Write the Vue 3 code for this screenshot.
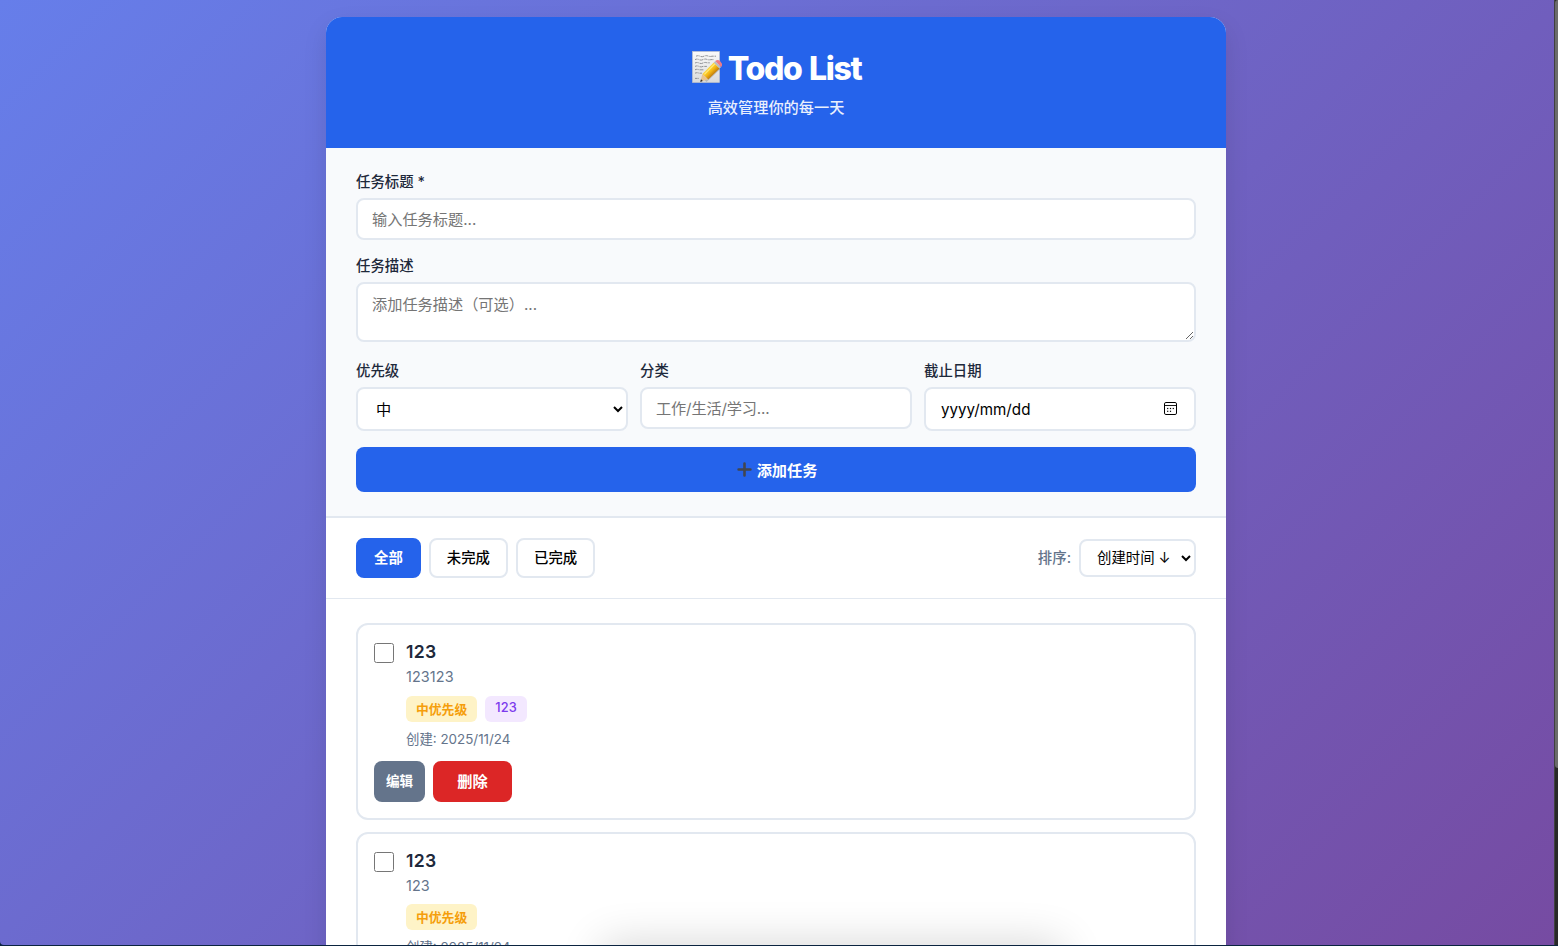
<script setup>
import { ref } from 'vue'

const filters = [
  { key: 'all', label: '全部' },
  { key: 'active', label: '未完成' },
  { key: 'completed', label: '已完成' },
]

const currentFilter = ref('all')
const title = ref('')
const description = ref('')
const priority = ref('medium')
const category = ref('')
const sortBy = ref('created_desc')

const todos = ref([
  { id: 2, title: '123', description: '123123', category: '123', createdAt: '2025/11/24', done: false },
  { id: 1, title: '123', description: '123', category: '', createdAt: '2025/11/24', done: false },
])

function removeTodo(id) {
  todos.value = todos.value.filter((todo) => todo.id !== id)
}
</script>

<template>
  <div class="window">
    <main class="page">
      <div class="container">
        <header class="header">
          <h1>
            <svg class="memo" viewBox="0 0 32 34" aria-hidden="true">
              <defs>
                <linearGradient id="paper" x1="0" y1="0" x2="0" y2="1">
                  <stop offset="0" stop-color="#fafafa" />
                  <stop offset="1" stop-color="#d9dadb" />
                </linearGradient>
                <linearGradient id="wood" x1="0.3" y1="0.3" x2="0.7" y2="0.7">
                  <stop offset="0" stop-color="#ffdc42" />
                  <stop offset="0.5" stop-color="#f6b915" />
                  <stop offset="1" stop-color="#b8730a" />
                </linearGradient>
              </defs>
              <rect x="1.4" y="1.4" width="27.2" height="31.2" fill="url(#paper)" stroke="#b9bdc5" stroke-width="0.6" />
              <g fill="none" stroke="#85878b" stroke-width="0.9" stroke-dasharray="2.6 .7 1.2 .5 3.4 .9">
                <path d="M5 6.2q2-1 4 0t4 0t4-.2t4 .2h4" />
                <path d="M4 9.6q2-1 4 0t4 0t4-.2t4 .2h3" />
                <path d="M4 13q2-1 4 0t4 0t4-.2h3" />
                <path d="M4 16.4q2-1 4 0t4 0h4" />
                <path d="M4 19.8q2-1 4 0h5" />
                <path d="M4 23.2q2-1 4 0h3" />
                <path d="M4 28.4h4" />
              </g>
              <path d="M14.5 31 28.5 18" stroke="#000" stroke-opacity="0.16" stroke-width="3" />
              <path d="M11.4 24 22.8 12.6l5.8 5.8L17.2 29.6z" fill="url(#wood)" />
              <path d="M13.4 24.4 24 13.8" stroke="#ffe777" stroke-width="1.3" />
              <path d="M11.4 24 9.3 31.6l7.9-2z" fill="#e9c38b" />
              <path d="m10 29.2-.9 2.7 2.8-.8z" fill="#333" />
              <path d="m22.8 12.6 1.5-1.5 5.8 5.8-1.5 1.5z" fill="#b8bdc4" />
              <path d="m24.3 11.1.7-.7q2.2-1 4.4 1.1t1.5 4.5l-.8.9z" fill="#ef7b85" />
            </svg>
            <span>Todo List</span>
          </h1>
          <p>高效管理你的每一天</p>
        </header>

        <form class="todo-form" @submit.prevent>
          <div class="form-group">
            <label for="title">任务标题 *</label>
            <input id="title" v-model="title" type="text" placeholder="输入任务标题...">
          </div>
          <div class="form-group form-group-desc">
            <label for="description">任务描述</label>
            <textarea id="description" v-model="description" placeholder="添加任务描述（可选）..." />
          </div>
          <div class="form-row">
            <div class="form-group">
              <label for="priority">优先级</label>
              <select id="priority" v-model="priority">
                <option value="low">低</option>
                <option value="medium">中</option>
                <option value="high">高</option>
              </select>
            </div>
            <div class="form-group">
              <label for="category">分类</label>
              <input id="category" v-model="category" type="text" class="category-input" placeholder="工作/生活/学习...">
            </div>
            <div class="form-group">
              <label>截止日期</label>
              <div class="date-field">
                <span>yyyy/mm/dd</span>
                <svg width="13" height="13" viewBox="0 0 13 13" aria-hidden="true">
                  <rect x="0.5" y="0.5" width="12" height="12" rx="1.4" fill="none" stroke="#000" />
                  <path d="M1 3.5h11" stroke="#000" stroke-width="0.9" />
                  <g fill="#000">
                    <rect x="5.9" y="5.9" width="1.2" height="1.2" />
                    <rect x="8.7" y="5.9" width="1.2" height="1.2" />
                    <rect x="3.1" y="5.9" width="1.2" height="1.2" />
                    <rect x="3.1" y="8.7" width="1.2" height="1.2" />
                    <rect x="5.9" y="8.7" width="1.2" height="1.2" />
                  </g>
                </svg>
              </div>
            </div>
          </div>
          <button type="submit" class="btn-add">
            <svg width="15" height="15" viewBox="0 0 15 15" aria-hidden="true">
              <path d="M7.5 1.6v11.8M1.6 7.5h11.8" stroke="#42464f" stroke-width="2.6" stroke-linecap="round" />
            </svg>
            <span>添加任务</span>
          </button>
        </form>

        <div class="toolbar">
          <div class="filters">
            <button
              v-for="item in filters"
              :key="item.key"
              class="filter-btn"
              :class="{ active: currentFilter === item.key }"
              @click="currentFilter = item.key"
            >
              {{ item.label }}
            </button>
          </div>
          <div class="sort">
            <label for="sort">排序:</label>
            <select id="sort" v-model="sortBy">
              <option value="created_desc">创建时间 ↓</option>
            </select>
          </div>
        </div>

        <div class="todo-list">
          <article v-for="todo in todos" :key="todo.id" class="todo-item">
            <div class="todo-main">
              <input v-model="todo.done" type="checkbox" class="todo-check">
              <div class="todo-content">
                <h3>{{ todo.title }}</h3>
                <p class="todo-desc">{{ todo.description }}</p>
                <div class="badges">
                  <span class="badge badge-medium">中优先级</span>
                  <span v-if="todo.category" class="badge badge-category">{{ todo.category }}</span>
                </div>
                <p class="todo-date">创建: {{ todo.createdAt }}</p>
              </div>
            </div>
            <div class="todo-actions">
              <button class="btn-edit">编辑</button>
              <button class="btn-delete" @click="removeTodo(todo.id)">删除</button>
            </div>
          </article>
        </div>
      </div>
      <div class="bottom-shadow" />
    </main>
    <div class="scrollbar"><div class="thumb" /></div>
  </div>
</template>

<style>
body {
  margin: 0;
  overflow: hidden;
}
</style>

<style scoped>
* {
  box-sizing: border-box;
  margin: 0;
  padding: 0;
}

.window {
  display: flex;
  height: 946px;
  border-bottom: 1px solid #0b2440;
  background: #0b2440;
  color: #1e293b;
  font-family: Inter, "Noto Sans CJK SC", sans-serif;
}

button,
input,
select,
textarea {
  font-family: inherit;
}

.page {
  position: relative;
  flex: 1;
  height: 945px;
  padding: 17px 2px 0 0;
  overflow: hidden;
  border-bottom-left-radius: 4px;
  background: linear-gradient(135deg, #667eea 0%, #764ba2 100%);
}

.scrollbar {
  width: 4px;
  height: 945px;
  background: #282828;
  border-left: 1px solid #404040;
}

.thumb {
  height: 768px;
  border-radius: 4px 0 0 4px;
  background: #6b6b6b;
}

.container {
  width: 900px;
  height: 1200px;
  margin: 0 auto;
  overflow: hidden;
  border-radius: 16px;
  background: #fff;
  box-shadow: 0 10px 25px rgba(0, 0, 0, 0.1);
}

.header {
  display: flex;
  flex-direction: column;
  align-items: center;
  height: 131px;
  padding-top: 31px;
  background: #2563eb;
  color: #fff;
}

.header h1 {
  display: flex;
  align-items: center;
  gap: 5px;
  height: 40px;
  font-size: 32px;
  font-weight: 800;
  line-height: 40px;
  letter-spacing: -1.35px;
  word-spacing: 1.8px;
}

.header h1 span {
  padding-top: 1px;
}

.memo {
  width: 32px;
  height: 34px;
  margin-top: -2px;
}

.header p {
  margin-top: 9px;
  font-size: 15.2px;
  font-weight: 500;
  line-height: 22px;
  opacity: 0.9;
}

.todo-form {
  height: 370px;
  padding: 25px 30px 24px;
  border-bottom: 2px solid #e2e8f0;
  background: #f8fafc;
}

.form-group {
  margin-bottom: 17px;
}

.form-group-desc {
  margin-bottom: 20px;
}

.form-group label {
  display: block;
  height: 17px;
  margin-bottom: 8px;
  font-size: 14.4px;
  font-weight: 550;
  line-height: 17px;
}

.form-group input,
.form-group textarea,
.form-group select,
.date-field {
  display: block;
  width: 100%;
  height: 42px;
  padding: 0 14px;
  border: 2px solid #e2e8f0;
  border-radius: 8px;
  background: #fff;
  color: #000;
  font-size: 15.2px;
}

.form-group textarea {
  height: 60px;
  padding-top: 10px;
  line-height: 22px;
  resize: vertical;
}

.form-group .category-input {
  letter-spacing: -0.15px;
}

.form-row {
  display: grid;
  grid-template-columns: repeat(3, 1fr);
  gap: 12px;
  margin-bottom: 16px;
}

.form-row .form-group {
  margin-bottom: 0;
}

.form-group select,
.form-group .date-field {
  height: 44px;
}

.form-group .date-field {
  display: flex;
  align-items: center;
  justify-content: space-between;
  padding-right: 17px;
  padding-left: 15px;
}

.date-field svg {
  margin-bottom: 1px;
}

.btn-add {
  display: flex;
  align-items: center;
  justify-content: center;
  gap: 5px;
  width: 100%;
  height: 45px;
  padding: 0 0 1px 2px;
  border: 0;
  border-radius: 8px;
  background: #2563eb;
  color: #fff;
  font-size: 15.2px;
  font-weight: 600;
}

.btn-add svg {
  margin-top: 1px;
}

.toolbar {
  display: flex;
  align-items: center;
  justify-content: space-between;
  height: 81px;
  padding: 0 30px;
  border-bottom: 1px solid #e2e8f0;
}

.filters,
.sort,
.todo-actions,
.badges {
  display: flex;
  gap: 8px;
}

.sort {
  align-items: center;
}

.filter-btn {
  height: 40px;
  padding: 0 16px 3px;
  border: 2px solid #e2e8f0;
  border-radius: 8px;
  background: #fff;
  color: #000;
  font-size: 14.4px;
  font-weight: 500;
}

.filter-btn.active {
  border-color: #2563eb;
  background: #2563eb;
  color: #fff;
  font-weight: 600;
}

.sort label {
  padding-bottom: 3px;
  color: #64748b;
  font-size: 14.4px;
  font-weight: 500;
}

.sort select {
  width: 117px;
  height: 38px;
  padding: 0 0 1px 12px;
  border: 2px solid #e2e8f0;
  border-radius: 8px;
  background: #fff;
  color: #000;
  font-size: 14.4px;
}

.todo-list {
  display: flex;
  flex-direction: column;
  gap: 12px;
  padding: 24.4px 30px;
}

.todo-item {
  height: 196.6px;
  padding: 16px;
  border: 2px solid #e2e8f0;
  border-radius: 12px;
}

.todo-main {
  display: flex;
  gap: 12px;
  height: 119.6px;
}

.todo-check {
  width: 20px;
  height: 20px;
  margin-top: 2px;
}

.todo-content h3 {
  height: 22px;
  font-size: 17.6px;
  font-weight: 600;
  line-height: 22px;
  letter-spacing: 0.25px;
}

.todo-desc {
  height: 17px;
  margin-top: 5px;
  color: #64748b;
  font-size: 14.4px;
  line-height: 17px;
  letter-spacing: 0.1px;
}

.badges {
  margin-top: 10.4px;
}

.badge {
  height: 26px;
  padding: 0 10px;
  border-radius: 6px;
  font-size: 12.8px;
  font-weight: 600;
  line-height: 27px;
}

.badge-medium {
  background: #fef3c7;
  color: #f59e0b;
}

.badge-category {
  background: #f3e8ff;
  color: #7c3aed;
  font-weight: 550;
  line-height: 24px;
  letter-spacing: 0.2px;
}

.todo-date {
  margin-top: 8px;
  color: #64748b;
  font-size: 13.4px;
  line-height: 19px;
}

.todo-actions button {
  height: 41px;
  border: 0;
  border-radius: 8px;
  color: #fff;
  font-weight: 600;
}

.todo-actions .btn-edit {
  padding: 0 12px 2px;
  background: #64748b;
  font-size: 13.6px;
}

.todo-actions .btn-delete {
  padding: 0 24px 2px;
  background: #dc2626;
  font-size: 15.2px;
}

/* soft shadow rising from the lower edge of the window */
.bottom-shadow {
  position: absolute;
  bottom: -46px;
  left: 614px;
  width: 436px;
  height: 36px;
  box-shadow: 0 0 44px 12px rgba(0, 0, 0, 0.16);
  pointer-events: none;
}
</style>
